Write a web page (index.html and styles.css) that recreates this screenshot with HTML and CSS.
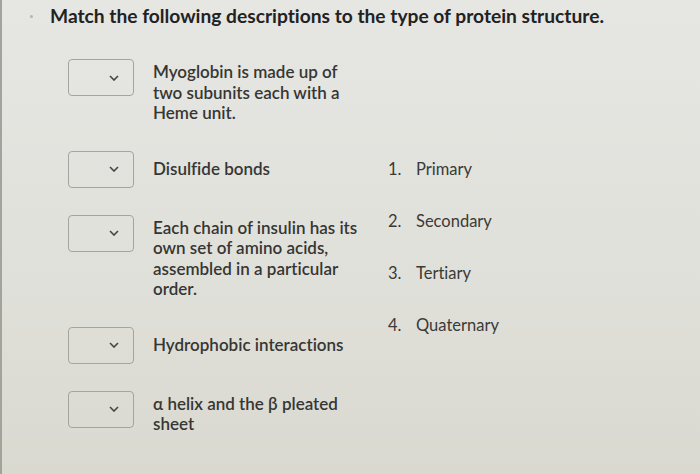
FILE: index.html
```html
<!DOCTYPE html>
<html>

<head lang="en">
    <meta charset="UTF-8">
    <title>Matching question</title>
    <link rel="stylesheet" href="styles.css">
</head>

<body>
    <div class="question">
        <h1 class="q-title"><span class="dot"></span>Match the following descriptions to the type of protein structure.</h1>
        <div class="q-body">
            <div class="pairs">
                <div class="pair">
                    <div class="pick"><svg width="10" height="6" viewBox="0 0 10 6"><polyline points="1,1 5,5 9,1" /></svg></div>
                    <p class="desc">Myoglobin is made up of<br>two subunits each with a<br>Heme unit.</p>
                </div>
                <div class="pair single">
                    <div class="pick"><svg width="10" height="6" viewBox="0 0 10 6"><polyline points="1,1 5,5 9,1" /></svg></div>
                    <p class="desc">Disulfide bonds</p>
                </div>
                <div class="pair">
                    <div class="pick"><svg width="10" height="6" viewBox="0 0 10 6"><polyline points="1,1 5,5 9,1" /></svg></div>
                    <p class="desc">Each chain of insulin has its<br>own set of amino acids,<br>assembled in a particular<br>order.</p>
                </div>
                <div class="pair single">
                    <div class="pick"><svg width="10" height="6" viewBox="0 0 10 6"><polyline points="1,1 5,5 9,1" /></svg></div>
                    <p class="desc">Hydrophobic interactions</p>
                </div>
                <div class="pair">
                    <div class="pick"><svg width="10" height="6" viewBox="0 0 10 6"><polyline points="1,1 5,5 9,1" /></svg></div>
                    <p class="desc">&alpha; helix and the &beta; pleated<br>sheet</p>
                </div>
            </div>
            <ol class="answers">
                <li><span class="num">1.</span>Primary</li>
                <li><span class="num">2.</span>Secondary</li>
                <li><span class="num">3.</span>Tertiary</li>
                <li><span class="num">4.</span>Quaternary</li>
            </ol>
        </div>
    </div>
</body>

</html>
```

FILE: styles.css
```css
* {
    margin: 0;
    padding: 0
}

html,
body {
    height: 100%;
}

body {
    background: linear-gradient(#e6e6e3, #e0e0da 60%, #d9d9d0);
    border-left: 2px solid #a3a39d;
    font-family: Lato, "Open Sans", sans-serif;
    font-variant-ligatures: none;
    color: #363633;
}

.question {
    padding: 5px 0 0 28px;
}

.q-title {
    display: flex;
    align-items: center;
    font-size: 19.2px;
    line-height: 22px;
    font-weight: 700;
    color: #222;
}

.dot {
    width: 3px;
    height: 3px;
    border-radius: 50%;
    background: #b5b5b0;
    margin-right: 17px;
}

.q-body {
    display: flex;
    margin-top: 32px;
}

.pairs {
    display: flex;
    flex-direction: column;
    gap: 27px;
    width: 320px;
    padding-left: 38px;
}

.pair {
    display: flex;
    align-items: flex-start;
}

.pair.single {
    align-items: center;
}

.pick {
    flex: none;
    width: 66px;
    height: 37px;
    border: 1px solid #a4a4a0;
    border-radius: 4px;
    display: flex;
    align-items: center;
    padding-left: 40px;
    box-sizing: border-box;
}

.pick svg {
    fill: none;
    stroke: #444;
    stroke-width: 1.6;
}

.desc {
    margin-left: 19px;
    padding-top: 3px;
    font-size: 17px;
    line-height: 20.5px;
    font-weight: 600;
}

.single .desc {
    padding-top: 0;
}

.answers {
    list-style: none;
    display: flex;
    flex-direction: column;
    gap: 32px;
    padding-top: 100px;
    font-size: 16.5px;
    line-height: 20px;
    color: #3a3a37;
}

.num {
    display: inline-block;
    width: 28px;
}
```
